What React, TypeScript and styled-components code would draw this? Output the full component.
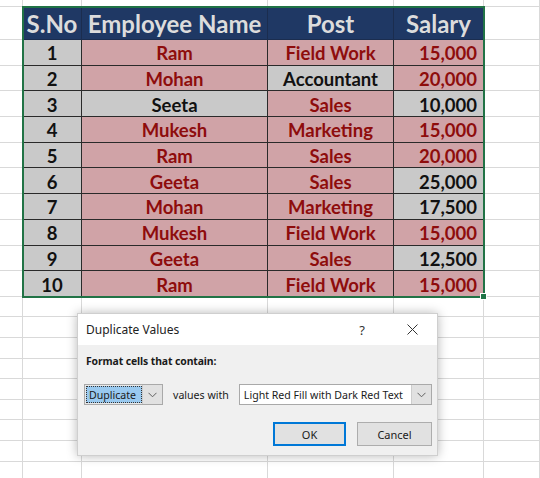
import React from 'react';
import styled, { createGlobalStyle, css } from 'styled-components';

type Kind = 'blank' | 'head' | 'pink' | 'gray' | 'num';

interface IRow {
    no: number;
    name: string;
    post: string;
    salary: string;
    nameDup: boolean;
    postDup: boolean;
    salaryDup: boolean;
}

const rows: IRow[] = [
    { no: 1, name: 'Ram', post: 'Field Work', salary: '15,000', nameDup: true, postDup: true, salaryDup: true },
    { no: 2, name: 'Mohan', post: 'Accountant', salary: '20,000', nameDup: true, postDup: false, salaryDup: true },
    { no: 3, name: 'Seeta', post: 'Sales', salary: '10,000', nameDup: false, postDup: true, salaryDup: false },
    { no: 4, name: 'Mukesh', post: 'Marketing', salary: '15,000', nameDup: true, postDup: true, salaryDup: true },
    { no: 5, name: 'Ram', post: 'Sales', salary: '20,000', nameDup: true, postDup: true, salaryDup: true },
    { no: 6, name: 'Geeta', post: 'Sales', salary: '25,000', nameDup: true, postDup: true, salaryDup: false },
    { no: 7, name: 'Mohan', post: 'Marketing', salary: '17,500', nameDup: true, postDup: true, salaryDup: false },
    { no: 8, name: 'Mukesh', post: 'Field Work', salary: '15,000', nameDup: true, postDup: true, salaryDup: true },
    { no: 9, name: 'Geeta', post: 'Sales', salary: '12,500', nameDup: true, postDup: true, salaryDup: false },
    { no: 10, name: 'Ram', post: 'Field Work', salary: '15,000', nameDup: true, postDup: true, salaryDup: true },
];

const GlobalStyle = createGlobalStyle`
    html, body {
        margin: 0;
        padding: 0;
        background: #ffffff;
    }
    body {
        width: 540px;
        height: 478px;
        overflow: hidden;
    }
`;

const Page = styled.div`
    position: relative;
    width: 540px;
    height: 478px;
    overflow: hidden;
`;

const Sheet = styled.div`
    display: grid;
    grid-template-columns: 23px 59px 186px 126px 90px 56px;
    grid-template-rows: 7px 33px repeat(10, 25.7px) repeat(9, 20.6px);
    font-family: Lato, 'Liberation Sans', sans-serif;
    font-weight: 700;
`;

const Cell = styled.div<{ $kind: Kind; $align?: 'center' | 'right' }>`
    box-sizing: border-box;
    display: flex;
    align-items: center;
    justify-content: ${(p) => (p.$align === 'right' ? 'flex-end' : 'center')};
    padding: 2px ${(p) => (p.$align === 'right' ? '6px' : '0')} 0 0;
    border-right: 1px solid #d9d9d9;
    border-bottom: 1px solid #d9d9d9;
    font-size: 18.5px;
    white-space: nowrap;
    ${(p) =>
        p.$kind === 'head' &&
        css`
            background: #1f3864;
            color: #dcdcdc;
            font-size: 24px;
            padding: 1px 0 0 0;
            border-color: #1b2d4f;
        `}
    ${(p) =>
        p.$kind === 'pink' &&
        css`
            background: #d0a3a7;
            color: #8e0c0c;
            border-color: #2a2a2a;
        `}
    ${(p) =>
        (p.$kind === 'gray' || p.$kind === 'num') &&
        css`
            background: #c9c9c9;
            color: #111111;
            border-color: #2a2a2a;
        `}
`;

const Selection = styled.div`
    position: absolute;
    left: 22px;
    top: 6px;
    width: 463px;
    height: 292px;
    box-sizing: border-box;
    border: 2px solid #217346;
    pointer-events: none;
`;

const FillHandle = styled.div`
    position: absolute;
    right: -4px;
    bottom: -4px;
    width: 5px;
    height: 5px;
    background: #217346;
    border: 1px solid #ffffff;
`;

const Dialog = styled.div`
    position: absolute;
    left: 77px;
    top: 313px;
    width: 361px;
    height: 143px;
    background: #f0f0f0;
    box-shadow: 0 0 10px rgba(0, 0, 0, 0.28);
    border: 1px solid #cfcfcf;
    box-sizing: border-box;
    display: flex;
    flex-direction: column;
    font-family: 'Noto Sans', 'Open Sans', sans-serif;
    font-size: 10.6px;
    color: #1a1a1a;
`;

const TitleBar = styled.div`
    height: 31px;
    background: #ffffff;
    display: flex;
    align-items: center;
    padding-left: 8px;
`;

const Title = styled.span`
    flex: 1;
    font-size: 12px;
    color: #222;
`;

const TitleButton = styled.div`
    width: 50px;
    height: 31px;
    display: flex;
    align-items: center;
    justify-content: center;
    font-size: 13px;
    color: #333;
`;

const Body = styled.div`
    display: flex;
    flex-direction: column;
    padding: 0 5px 0 6px;
`;

const Label = styled.div`
    margin-top: 8px;
    margin-left: 2px;
    line-height: 16px;
    font-size: 10.4px;
    letter-spacing: -0.1px;
    font-weight: 700;
    white-space: nowrap;
`;

const Controls = styled.div`
    margin-top: 15px;
    display: flex;
    align-items: center;
    gap: 10px;
    height: 21px;
    white-space: nowrap;
`;

const Combo = styled.div<{ $width: number; $white?: boolean }>`
    box-sizing: border-box;
    width: ${(p) => p.$width}px;
    height: 21px;
    display: flex;
    flex-shrink: 0;
    border: 1px solid #a9a9a9;
    background: ${(p) => (p.$white ? '#ffffff' : '#e8e8e8')};
`;

const ComboText = styled.div<{ $selected?: boolean }>`
    flex: 1;
    display: flex;
    align-items: center;
    padding-left: 3px;
    margin: 1px;
    white-space: nowrap;
    overflow: hidden;
    ${(p) =>
        p.$selected &&
        css`
            background: #99c9ef;
            outline: 1px dotted #333;
            outline-offset: -1px;
            margin-right: 0;
        `}
`;

const ComboArrow = styled.div`
    width: 19px;
    display: flex;
    align-items: center;
    justify-content: center;
    background: #e1e1e1;
    border-left: 1px solid #cdcdcd;
`;

const Buttons = styled.div`
    margin-top: 17px;
    display: flex;
    justify-content: flex-end;
    gap: 11px;
`;

const Button = styled.div<{ $primary?: boolean; $width: number }>`
    box-sizing: border-box;
    width: ${(p) => p.$width}px;
    height: 24px;
    display: flex;
    align-items: center;
    justify-content: center;
    font-size: 11px;
    background: #e1e1e1;
    border: ${(p) => (p.$primary ? '2px solid #0078d7' : '1px solid #adadad')};
`;

const Chevron: React.FC = () => (
    <svg width="9" height="6" viewBox="0 0 9 6">
        <polyline points="0.5,0.8 4.5,4.8 8.5,0.8" fill="none" stroke="#606060" strokeWidth="1" />
    </svg>
);

const CloseIcon: React.FC = () => (
    <svg width="11" height="11" viewBox="0 0 11 11">
        <line x1="0.5" y1="0.5" x2="10.5" y2="10.5" stroke="#333" strokeWidth="1" />
        <line x1="10.5" y1="0.5" x2="0.5" y2="10.5" stroke="#333" strokeWidth="1" />
    </svg>
);

const blankRow = (key: string) =>
    Array.from({ length: 6 }).map((_, i) => <Cell key={`${key}-${i}`} $kind="blank" />);

const App: React.FC = () => {
    return (
        <Page>
            <GlobalStyle />
            <Sheet>
                {blankRow('top')}
                <Cell $kind="blank" />
                <Cell $kind="head">S.No</Cell>
                <Cell $kind="head">Employee Name</Cell>
                <Cell $kind="head">Post</Cell>
                <Cell $kind="head">Salary</Cell>
                <Cell $kind="blank" />
                {rows.map((r) => (
                    <React.Fragment key={r.no}>
                        <Cell $kind="blank" />
                        <Cell $kind="num">{r.no}</Cell>
                        <Cell $kind={r.nameDup ? 'pink' : 'gray'}>{r.name}</Cell>
                        <Cell $kind={r.postDup ? 'pink' : 'gray'}>{r.post}</Cell>
                        <Cell $kind={r.salaryDup ? 'pink' : 'gray'} $align="right">
                            {r.salary}
                        </Cell>
                        <Cell $kind="blank" />
                    </React.Fragment>
                ))}
                {Array.from({ length: 9 }).map((_, i) => blankRow(`b${i}`))}
            </Sheet>
            <Selection>
                <FillHandle />
            </Selection>
            <Dialog>
                <TitleBar>
                    <Title>Duplicate Values</Title>
                    <TitleButton>?</TitleButton>
                    <TitleButton>
                        <CloseIcon />
                    </TitleButton>
                </TitleBar>
                <Body>
                    <Label>Format cells that contain:</Label>
                    <Controls>
                        <Combo $width={79}>
                            <ComboText $selected>Duplicate</ComboText>
                            <ComboArrow>
                                <Chevron />
                            </ComboArrow>
                        </Combo>
                        <span>values with</span>
                        <Combo $width={193} $white>
                            <ComboText>Light Red Fill with Dark Red Text</ComboText>
                            <ComboArrow>
                                <Chevron />
                            </ComboArrow>
                        </Combo>
                    </Controls>
                    <Buttons>
                        <Button $primary $width={73}>
                            OK
                        </Button>
                        <Button $width={75}>Cancel</Button>
                    </Buttons>
                </Body>
            </Dialog>
        </Page>
    );
};

export default App;
